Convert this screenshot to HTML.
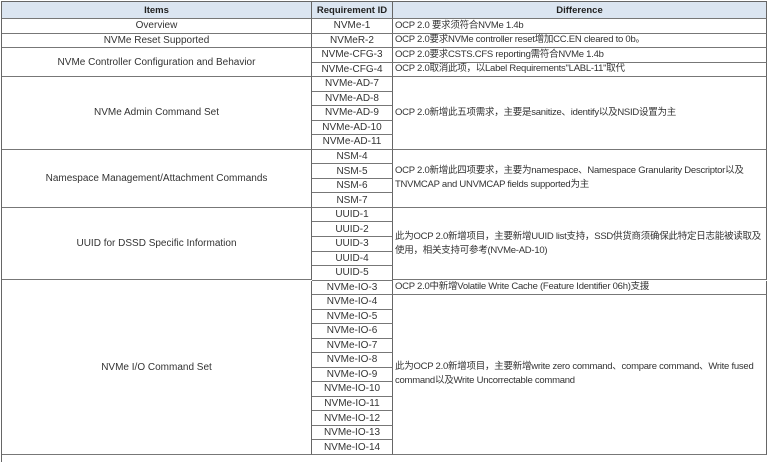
<!DOCTYPE html>
<html><head><meta charset="utf-8"><style>
html,body{margin:0;padding:0;background:#fff;width:768px;height:455px;overflow:hidden}
#t{position:absolute;left:1px;top:1px;width:765px;height:460px;border-left:1px solid #666;border-top:1px solid #666}
.c{position:absolute;box-sizing:border-box;border-right:1px solid #666;border-bottom:1px solid #777;display:flex;align-items:center;justify-content:center;font-family:"Liberation Sans","Noto Sans CJK SC",sans-serif;font-size:10px;color:#333;white-space:nowrap;overflow:hidden}
.h{background:#dbe5f1;font-weight:bold;font-size:9.5px;color:#222}
.d{justify-content:flex-start;padding-left:2px;white-space:normal;line-height:14px;font-size:9.5px;letter-spacing:-0.25px}
.a{left:0;width:310px}.b{left:310px;width:81px}.e{left:391px;width:374px}
</style></head><body><div id="t">
<div class="c h a" style="top:0;height:17px">Items</div>
<div class="c h b" style="top:0;height:17px">Requirement ID</div>
<div class="c h e" style="top:0;height:17px">Difference</div>

<div class="c a" style="top:17px;height:14.5px">Overview</div>
<div class="c a" style="top:31.5px;height:14.6px">NVMe Reset Supported</div>
<div class="c a" style="top:46.1px;height:29px">NVMe Controller Configuration and Behavior</div>
<div class="c a" style="top:75.1px;height:72.7px">NVMe Admin Command Set</div>
<div class="c a" style="top:147.8px;height:58.1px">Namespace Management/Attachment Commands</div>
<div class="c a" style="top:205.9px;height:72.6px">UUID for DSSD Specific Information</div>
<div class="c a" style="top:278.5px;height:174.4px">NVMe I/O Command Set</div>

<div class="c b" style="top:17px;height:14.5px">NVMe-1</div>
<div class="c b" style="top:31.5px;height:14.6px">NVMeR-2</div>
<div class="c b" style="top:46.1px;height:14.5px">NVMe-CFG-3</div>
<div class="c b" style="top:60.6px;height:14.5px">NVMe-CFG-4</div>
<div class="c b" style="top:75.1px;height:14.6px">NVMe-AD-7</div>
<div class="c b" style="top:89.7px;height:14.5px">NVMe-AD-8</div>
<div class="c b" style="top:104.2px;height:14.5px">NVMe-AD-9</div>
<div class="c b" style="top:118.7px;height:14.5px">NVMe-AD-10</div>
<div class="c b" style="top:133.2px;height:14.6px">NVMe-AD-11</div>
<div class="c b" style="top:147.8px;height:14.5px">NSM-4</div>
<div class="c b" style="top:162.3px;height:14.5px">NSM-5</div>
<div class="c b" style="top:176.8px;height:14.6px">NSM-6</div>
<div class="c b" style="top:191.4px;height:14.5px">NSM-7</div>
<div class="c b" style="top:205.9px;height:14.5px">UUID-1</div>
<div class="c b" style="top:220.4px;height:14.6px">UUID-2</div>
<div class="c b" style="top:235px;height:14.5px">UUID-3</div>
<div class="c b" style="top:249.5px;height:14.5px">UUID-4</div>
<div class="c b" style="top:264px;height:14.5px">UUID-5</div>
<div class="c b" style="top:278.5px;height:14.6px">NVMe-IO-3</div>
<div class="c b" style="top:293.1px;height:14.5px">NVMe-IO-4</div>
<div class="c b" style="top:307.6px;height:14.5px">NVMe-IO-5</div>
<div class="c b" style="top:322.1px;height:14.6px">NVMe-IO-6</div>
<div class="c b" style="top:336.7px;height:14.5px">NVMe-IO-7</div>
<div class="c b" style="top:351.2px;height:14.5px">NVMe-IO-8</div>
<div class="c b" style="top:365.7px;height:14.5px">NVMe-IO-9</div>
<div class="c b" style="top:380.2px;height:14.6px">NVMe-IO-10</div>
<div class="c b" style="top:394.8px;height:14.5px">NVMe-IO-11</div>
<div class="c b" style="top:409.3px;height:14.5px">NVMe-IO-12</div>
<div class="c b" style="top:423.8px;height:14.6px">NVMe-IO-13</div>
<div class="c b" style="top:438.4px;height:14.5px">NVMe-IO-14</div>

<div class="c d e" style="top:17px;height:14.5px">OCP 2.0 要求须符合NVMe 1.4b</div>
<div class="c d e" style="top:31.5px;height:14.6px">OCP 2.0要求NVMe controller reset增加CC.EN cleared to 0b。</div>
<div class="c d e" style="top:46.1px;height:14.5px">OCP 2.0要求CSTS.CFS reporting需符合NVMe 1.4b</div>
<div class="c d e" style="top:60.6px;height:14.5px">OCP 2.0取消此项，以Label Requirements"LABL-11"取代</div>
<div class="c d e" style="top:75.1px;height:72.7px">OCP 2.0新增此五项需求，主要是sanitize、identify以及NSID设置为主</div>
<div class="c d e" style="top:147.8px;height:58.1px">OCP 2.0新增此四项要求，主要为namespace、Namespace Granularity Descriptor以及TNVMCAP and UNVMCAP fields supported为主</div>
<div class="c d e" style="top:205.9px;height:72.6px">此为OCP 2.0新增项目，主要新增UUID list支持，SSD供货商须确保此特定日志能被读取及使用，相关支持可参考(NVMe-AD-10)</div>
<div class="c d e" style="top:278.5px;height:14.6px">OCP 2.0中新增Volatile Write Cache (Feature Identifier 06h)支援</div>
<div class="c d e" style="top:293.1px;height:159.8px">此为OCP 2.0新增项目，主要新增write zero command、compare command、Write fused command以及Write Uncorrectable command</div>
</div></body></html>
